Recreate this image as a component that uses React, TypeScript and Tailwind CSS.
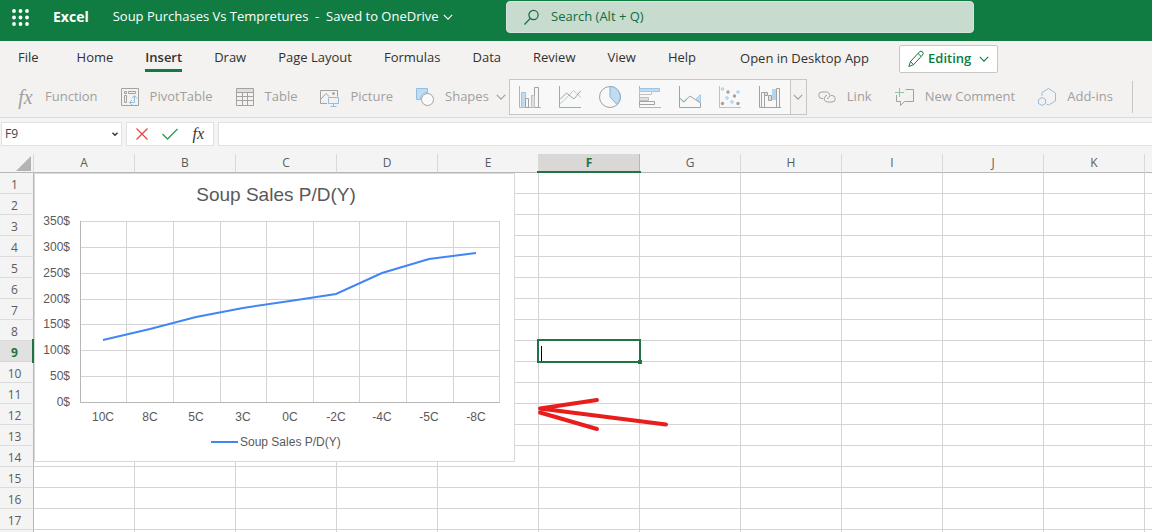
import type { ReactNode } from "react";

const TABS = ["File", "Home", "Insert", "Draw", "Page Layout", "Formulas", "Data", "Review", "View", "Help"];
const COLUMNS = ["A", "B", "C", "D", "E", "F", "G", "H", "I", "J", "K", ""];
const ROWS = Array.from({ length: 18 }, (_, i) => i + 1);

const POINTS = [
  { label: "10C", x: 69, y: 167 },
  { label: "8C", x: 116, y: 156 },
  { label: "5C", x: 162, y: 144 },
  { label: "3C", x: 209, y: 135 },
  { label: "0C", x: 256, y: 128 },
  { label: "-2C", x: 302, y: 121 },
  { label: "-4C", x: 348, y: 100 },
  { label: "-5C", x: 395, y: 86 },
  { label: "-8C", x: 442, y: 80 },
];
const V_LINES = [46, 92, 139, 186, 232, 279, 325, 372, 419, 465];
const H_LINES = [
  { label: "350$", y: 48 },
  { label: "300$", y: 74 },
  { label: "250$", y: 100 },
  { label: "200$", y: 126 },
  { label: "150$", y: 151 },
  { label: "100$", y: 177 },
  { label: "50$", y: 203 },
  { label: "0$", y: 229 },
];

function Chevron({ size = 10 }: { size?: number }) {
  return (
    <svg
      width={size}
      height={size}
      viewBox="0 0 10 10"
      fill="none"
      stroke="currentColor"
      strokeWidth={size < 8 ? 2.4 : 1.1}
      aria-hidden="true"
    >
      <path d="M0.8 2.8 5 7.2 9.2 2.8" />
    </svg>
  );
}

function Icon({ size = 18, children }: { size?: number; children: ReactNode }) {
  return (
    <svg
      width={size}
      height={size}
      viewBox={`0 0 ${size} ${size}`}
      fill="none"
      stroke="#a3a2a1"
      className="shrink-0"
      aria-hidden="true"
    >
      {children}
    </svg>
  );
}

function Tool({ icon, label, menu }: { icon: ReactNode; label: string; menu?: boolean }) {
  return (
    <button type="button" className="flex items-center gap-[11px] whitespace-nowrap text-[#a19f9d]">
      {icon}
      {label}
      {menu && <span className="-ml-1"><Chevron /></span>}
    </button>
  );
}

function PivotIcon() {
  return (
    <Icon>
      <path d="M0.5 0.5h17v17H0.5z M3.5 3.5h2v2h-2z M7.5 3.5h7v2h-7z M3.5 7.5h2v7h-2z" />
      <path d="M8.5 14.5h5V8M8.5 14.5l2.5-2.5M8.5 14.5l2.5 2.5M13.5 7.5l-2.5 3M13.5 7.5l2.5 3" stroke="#8fbfe3" />
    </Icon>
  );
}

function TableIcon() {
  return (
    <Icon>
      <path d="M1 1h16v3H1z" fill="#e1dfdd" stroke="none" />
      <path d="M0.5 0.5h17v17H0.5zM0.5 4.5h17M0.5 8.5h17M0.5 12.5h17M6.5 4.5v13M11.5 4.5v13" />
    </Icon>
  );
}

function PictureIcon() {
  return (
    <Icon size={19}>
      <path d="M7 15.5H0.5v-13h17v6M1 11l5-5.5 3 3" />
      <circle cx="13.5" cy="5.5" r="1" fill="#a3a2a1" />
      <path d="M8.5 9.5h10v6h-10zM13.5 15.5v3M10.5 18.5h6" stroke="#8fbfe3" />
    </Icon>
  );
}

function ShapesIcon() {
  return (
    <Icon>
      <path d="M0.5 0.5h11v4A6.5 6.5 0 0 0 4.5 11.5h-4z" fill="#c2dbf0" stroke="#8fbfe3" />
      <circle cx="11.5" cy="11.5" r="6" fill="#fafafa" />
    </Icon>
  );
}

function LinkIcon() {
  return (
    <Icon>
      <path d="M5 10.5H4a3.2 3.2 0 0 1 0-6.500h4.500a3.300 3.300 0 0 1 2.500 5.500q-.8 1-2 1" />
      <path d="M13 7.500h1a3.200 3.200 0 0 1 0 6.500H9.500A3.300 3.300 0 0 1 7 8.500q.8-1 2-1" />
    </Icon>
  );
}

function CommentIcon() {
  return (
    <Icon size={19}>
      <path d="M10.5 1.5h8v12H9.5L5.5 17.5v-4h-4V7" />
      <path d="M4.5 0v9M0 4.5h9" stroke="#8cc7a0" />
    </Icon>
  );
}

function AddinsIcon() {
  return (
    <Icon>
      <path d="M4 8V4.5L10.5 0.5l7 4.500v8l-7 4-2-1" stroke="#97bde2" />
      <path d="M4 9.5l3.5 2v4L4 17.5.5 15.5v-4z" stroke="#97bde2" />
    </Icon>
  );
}

const CHARTS: { name: string; art: ReactNode }[] = [
  {
    name: "Column chart",
    art: (
      <>
        <path d="M0.5 0v21.5H22" stroke="#b5b4b3" />
        <path d="M2.5 6.5h4v15h-4z" fill="#c2dbf0" stroke="#9cc5e6" />
        <path d="M6.5 12.5h3v9h-3zM15.5 1.5h4v20h-4z" />
        <path d="M12.5 9.5h3v12h-3z" fill="#e1dfdd" stroke="#c3c1bf" />
      </>
    ),
  },
  {
    name: "Line chart",
    art: (
      <>
        <path d="M0.5 0v21.5H22" stroke="#a9a8a7" />
        <path d="M1 17.5 4.5 15 14.5 4.5l7.500 7" stroke="#a5cfe8" />
        <path d="M1 13.5 7.5 7l7.500 6 7-8.500" />
      </>
    ),
  },
  {
    name: "Pie chart",
    art: (
      <>
        <circle cx="11" cy="11" r="10.5" />
        <path d="M11 0.5V11l7 7.500A10.5 10.5 0 0 0 11 0.5z" fill="#c2dbf0" stroke="#7fb5e0" />
      </>
    ),
  },
  {
    name: "Bar chart",
    art: (
      <>
        <path d="M0.5 0v21.5H22" stroke="#b5b4b3" />
        <path d="M0.5 2.5h20v3h-20z" fill="#c2dbf0" stroke="#9cc5e6" />
        <path d="M0.5 5.5h12v3h-12z" stroke="#c3c1bf" />
        <path d="M0.5 11.5h9v3h-9z" fill="#e1dfdd" stroke="#c3c1bf" />
        <path d="M0.5 15.5h15v3h-15z" />
      </>
    ),
  },
  {
    name: "Area chart",
    art: (
      <>
        <path d="M1 12l4.500 4 2.500-3.500L5 16zM16.5 13.5l5-5v8z" fill="#c2dbf0" stroke="#a5cfe8" />
        <path d="M0.5 0v21.5h21V17L11 10l-6.500 6-4-4" />
      </>
    ),
  },
  {
    name: "Scatter chart",
    art: (
      <>
        <path d="M0.5 0v21.5H22" stroke="#c3c1bf" />
        <g fill="#a3a2a1" stroke="none">
          <circle cx="9" cy="6" r="1.7" />
          <circle cx="15.5" cy="10" r="1.7" />
          <circle cx="3.5" cy="17.5" r="1.7" />
          <circle cx="19" cy="17.5" r="1.7" />
        </g>
        <g fill="#dcebf5" stroke="#a5cfe8">
          <circle cx="3.5" cy="3" r="1.3" />
          <circle cx="19" cy="6" r="1.3" />
          <circle cx="8" cy="12" r="1.3" />
          <circle cx="13" cy="16" r="1.3" />
        </g>
      </>
    ),
  },
  {
    name: "Waterfall chart",
    art: (
      <>
        <path d="M0.5 0v21.5H22" />
        <path d="M2.5 6.5h3v15h-3zM17.5 2.5h3v19h-3z" />
        <path d="M5.5 6.5h3v3h-3zM9.5 9.5h3v5h-3z" fill="#e1dfdd" />
        <path d="M13 3h4v11h-4z" fill="#b4d5ee" stroke="none" />
      </>
    ),
  },
];

function TopBar() {
  return (
    <header className="flex h-[41px] bg-[#107c41] pt-px text-[13px] text-white">
      <div className="flex h-8 w-[506px] shrink-0 items-center whitespace-nowrap pl-3">
        <button type="button" aria-label="App launcher">
          <svg width="17" height="17" viewBox="0 0 17 17" fill="currentColor" aria-hidden="true">
            {[2, 8.5, 15].map((y) => [2, 8.5, 15].map((x) => <circle key={`${x}-${y}`} cx={x} cy={y} r="1.9" />))}
          </svg>
        </button>
        <a href="#" className="ml-6 text-sm font-bold">Excel</a>
        <button type="button" className="ml-6 flex items-center gap-1">
          <span>Soup Purchases Vs Tempretures&nbsp; -&nbsp; Saved to OneDrive</span>
          <Chevron />
        </button>
      </div>
      <label className="flex h-8 w-full max-w-[468px] items-center gap-[11px] rounded-sm border border-[#d5e5dc] bg-[#c7dbcf] px-4 text-[#136c3c]">
        <svg width="17" height="17" viewBox="0 0 17 17" fill="none" stroke="currentColor" strokeWidth="1.2" aria-hidden="true">
          <circle cx="10.5" cy="6" r="4.6" />
          <path d="M7.2 9.3 1.5 15.5" />
        </svg>
        <input
          type="text"
          aria-label="Search"
          placeholder="Search (Alt + Q)"
          className="min-w-0 flex-1 bg-transparent outline-none placeholder:text-[#136c3c]"
        />
      </label>
    </header>
  );
}

function TabRow() {
  return (
    <div className="flex h-9 items-center whitespace-nowrap pl-[18px] text-[13px] text-[#323130]">
      <nav className="flex gap-8">
        {TABS.map((tab) => (
          <button
            key={tab}
            type="button"
            className={
              tab === "Insert"
                ? "border-b-[3px] border-[#107c41] pt-0.5 pb-0.5 font-semibold"
                : tab === "File"
                  ? "mr-1.5 border-b-[3px] border-transparent pt-0.5 pb-0.5"
                  : "border-b-[3px] border-transparent pt-0.5 pb-0.5"
            }
          >
            {tab}
          </button>
        ))}
      </nav>
      <button type="button" className="ml-11">Open in Desktop App</button>
      <button
        type="button"
        className="ml-[30px] flex h-7 items-center gap-1 rounded-xs border border-[#c8c6c4] bg-white px-2 font-semibold text-[#107c41]"
      >
        <svg width="16" height="18" viewBox="0 0 16 18" fill="none" stroke="currentColor" aria-hidden="true">
          <path d="M0.8 16.5 2.5 11.5 11.5 1.8q1.5-1.3 3 0t0 3.2L5.5 14.7zM2.5 11.5l3 3.2M10 3.5l3.2 3" />
        </svg>
        Editing
        <span className="ml-1"><Chevron /></span>
      </button>
    </div>
  );
}

function Toolbar() {
  return (
    <div className="flex h-10 items-center gap-[23px] pl-[17px] text-[13px]">
      <Tool
        icon={<span className="w-[17px] font-['Liberation_Serif',serif] text-xl leading-5 italic">fx</span>}
        label="Function"
      />
      <Tool icon={<PivotIcon />} label="PivotTable" />
      <Tool icon={<TableIcon />} label="Table" />
      <Tool icon={<PictureIcon />} label="Picture" />
      <Tool icon={<ShapesIcon />} label="Shapes" menu />
      <div className="-mr-3 -ml-5 flex h-9 shrink-0 border border-[#c8c6c4] bg-[#f8f8f8]">
        {CHARTS.map((chart) => (
          <button key={chart.name} type="button" aria-label={chart.name} className="px-[9px]">
            <Icon size={22}>{chart.art}</Icon>
          </button>
        ))}
        <button
          type="button"
          aria-label="More charts"
          className="flex w-4 items-center justify-center border-l border-[#c8c6c4] bg-[#f3f2f1] text-[#a19f9d]"
        >
          <Chevron />
        </button>
      </div>
      <Tool icon={<LinkIcon />} label="Link" />
      <Tool icon={<CommentIcon />} label="New Comment" />
      <Tool icon={<AddinsIcon />} label="Add-ins" />
      <span className="-ml-1 h-8 w-px bg-[#c8c6c4]" />
    </div>
  );
}

function FormulaBar() {
  return (
    <div className="flex gap-1 border-t border-[#dadada] bg-[#f4f4f4] pt-1 pb-2 pl-px text-xs text-[#444]">
      <div className="flex h-6 w-[121px] items-center border border-[#e1e1e1] bg-white px-[3px]">
        <input type="text" aria-label="Name box" defaultValue="F9" className="min-w-0 flex-1 outline-none" />
        <button type="button" aria-label="Cell names" className="text-[#333]">
          <Chevron size={6} />
        </button>
      </div>
      <div className="flex h-6 w-[88px] items-center justify-between border border-[#e1e1e1] bg-white px-[9px]">
        <button type="button" aria-label="Cancel">
          <svg width="12" height="12" viewBox="0 0 12 12" fill="none" stroke="#e8413b" strokeWidth="1.2" aria-hidden="true">
            <path d="M0.5 0.5l11 11M11.5 0.5l-11 11" />
          </svg>
        </button>
        <button type="button" aria-label="Enter">
          <svg width="16" height="12" viewBox="0 0 16 12" fill="none" stroke="#2d9a51" strokeWidth="1.3" aria-hidden="true">
            <path d="M0.5 6l5 5L15.5 1" />
          </svg>
        </button>
        <button
          type="button"
          aria-label="Insert function"
          className="font-['Liberation_Serif',serif] text-base leading-5 text-[#333] italic"
        >
          fx
        </button>
      </div>
      <input type="text" aria-label="Formula" className="h-6 min-w-0 flex-1 border border-r-0 border-[#e1e1e1] bg-white px-1 outline-none" />
    </div>
  );
}

function SoupChart() {
  return (
    <svg
      width="481"
      height="289"
      viewBox="0 0 481 289"
      className="absolute top-[19px] left-[34px] bg-white font-['Liberation_Sans',Arial,sans-serif] text-xs"
      role="img"
      aria-label="Soup Sales P/D(Y)"
    >
      <path d="M0.5 0.5h480v288H0.5z" fill="none" stroke="#d9d9d9" />
      <text x="242" y="28" textAnchor="middle" fill="#595959" className="text-[19px]">Soup Sales P/D(Y)</text>
      {V_LINES.map((x) => (
        <path key={x} d={`M${x + 0.5} 48v181`} stroke="#d4d4d4" />
      ))}
      {H_LINES.map((line) => (
        <g key={line.label}>
          <path d={`M46 ${line.y + 0.5}h420`} stroke="#d4d4d4" />
          <text x="36" y={line.y + 4} textAnchor="end" fill="#595959">{line.label}</text>
        </g>
      ))}
      <path d="M46.5 48v181.5h419" fill="none" stroke="#b7b7b7" />
      <polyline points={POINTS.map((p) => `${p.x},${p.y}`).join(" ")} fill="none" stroke="#4285f4" strokeWidth="2" />
      {POINTS.map((p) => (
        <text key={p.label} x={p.x} y="248" textAnchor="middle" fill="#595959">{p.label}</text>
      ))}
      <path d="M177 269h27" stroke="#4285f4" strokeWidth="2" />
      <text x="206" y="273" fill="#595959">Soup Sales P/D(Y)</text>
    </svg>
  );
}

function Sheet() {
  return (
    <main className="relative min-h-0 flex-1 overflow-hidden bg-white">
      <table className="w-[1246px] table-fixed border-separate border-spacing-0 text-xs text-[#5c5c5c]">
        <colgroup>
          <col className="w-[34px]" />
          {COLUMNS.map((c) => <col key={c} className="w-[101px]" />)}
        </colgroup>
        <thead>
          <tr className="h-[19px] bg-[#f4f4f4]">
            <th className="border-r border-b border-r-[#d9d9d9] border-b-[#b7b7b7] p-0" aria-label="Select all">
              <svg width="15" height="15" viewBox="0 0 15 15" className="mr-0.5 ml-auto" aria-hidden="true">
                <path d="M15 0v15H0z" fill="#b3b3b3" />
              </svg>
            </th>
            {COLUMNS.map((c) =>
              c === "F" ? (
                <th key={c} className="relative border-r border-b border-r-[#b7b7b7] border-b-[#217346] bg-[#d9d8d7] p-0 leading-4 font-bold text-[#217346]">
                  {c}
                  <span className="absolute -right-0.5 -bottom-px -left-0.5 h-0.5 bg-[#217346]" />
                </th>
              ) : (
                <th key={c} className="border-r border-b border-r-[#d9d9d9] border-b-[#b7b7b7] p-0 leading-4 font-normal">
                  {c}
                </th>
              ),
            )}
          </tr>
        </thead>
        <tbody>
          {ROWS.map((r) => (
            <tr key={r} className="h-[21px]">
              {r === 9 ? (
                <th className="relative border-r border-b border-r-[#217346] border-b-[#d4d4d4] bg-[#e1e1e1] p-0 pr-1 pt-1 leading-4 font-bold text-[#217346]">
                  {r}
                  <span className="absolute -top-0.5 -right-px -bottom-0.5 w-0.5 bg-[#217346]" />
                </th>
              ) : (
                <th className="border-r border-b border-r-[#b7b7b7] border-b-[#dcdcdc] bg-[#f4f4f4] p-0 pr-1 pt-1 leading-4 font-normal">
                  {r < 18 && r}
                </th>
              )}
              {COLUMNS.map((c) => (
                <td key={c} className="relative border-r border-b border-[#d4d4d4] p-0">
                  {r === 9 && c === "F" && (
                    <span className="absolute -inset-0.5 z-10 border-2 border-[#217346] bg-white">
                      <span className="absolute top-[5px] left-0.5 h-[15px] w-px bg-black" />
                      <span className="absolute -right-[3px] -bottom-[3px] h-1 w-1 bg-[#217346]" />
                    </span>
                  )}
                </td>
              ))}
            </tr>
          ))}
        </tbody>
      </table>
      <SoupChart />
      <svg
        width="132"
        height="36"
        viewBox="0 0 132 36"
        className="absolute top-[243px] left-[537px]"
        fill="none"
        stroke="#e81e1c"
        strokeWidth="4"
        strokeLinecap="round"
        strokeLinejoin="round"
        aria-hidden="true"
      >
        <path d="M60 3 3 11.5 129 27.5M3 15.5l57 16.5" />
      </svg>
    </main>
  );
}

export default function App() {
  return (
    <div className="flex h-screen flex-col overflow-hidden bg-[#f3f2f1] font-['Open_Sans','Noto_Sans',sans-serif]">
      <TopBar />
      <TabRow />
      <Toolbar />
      <FormulaBar />
      <Sheet />
    </div>
  );
}
